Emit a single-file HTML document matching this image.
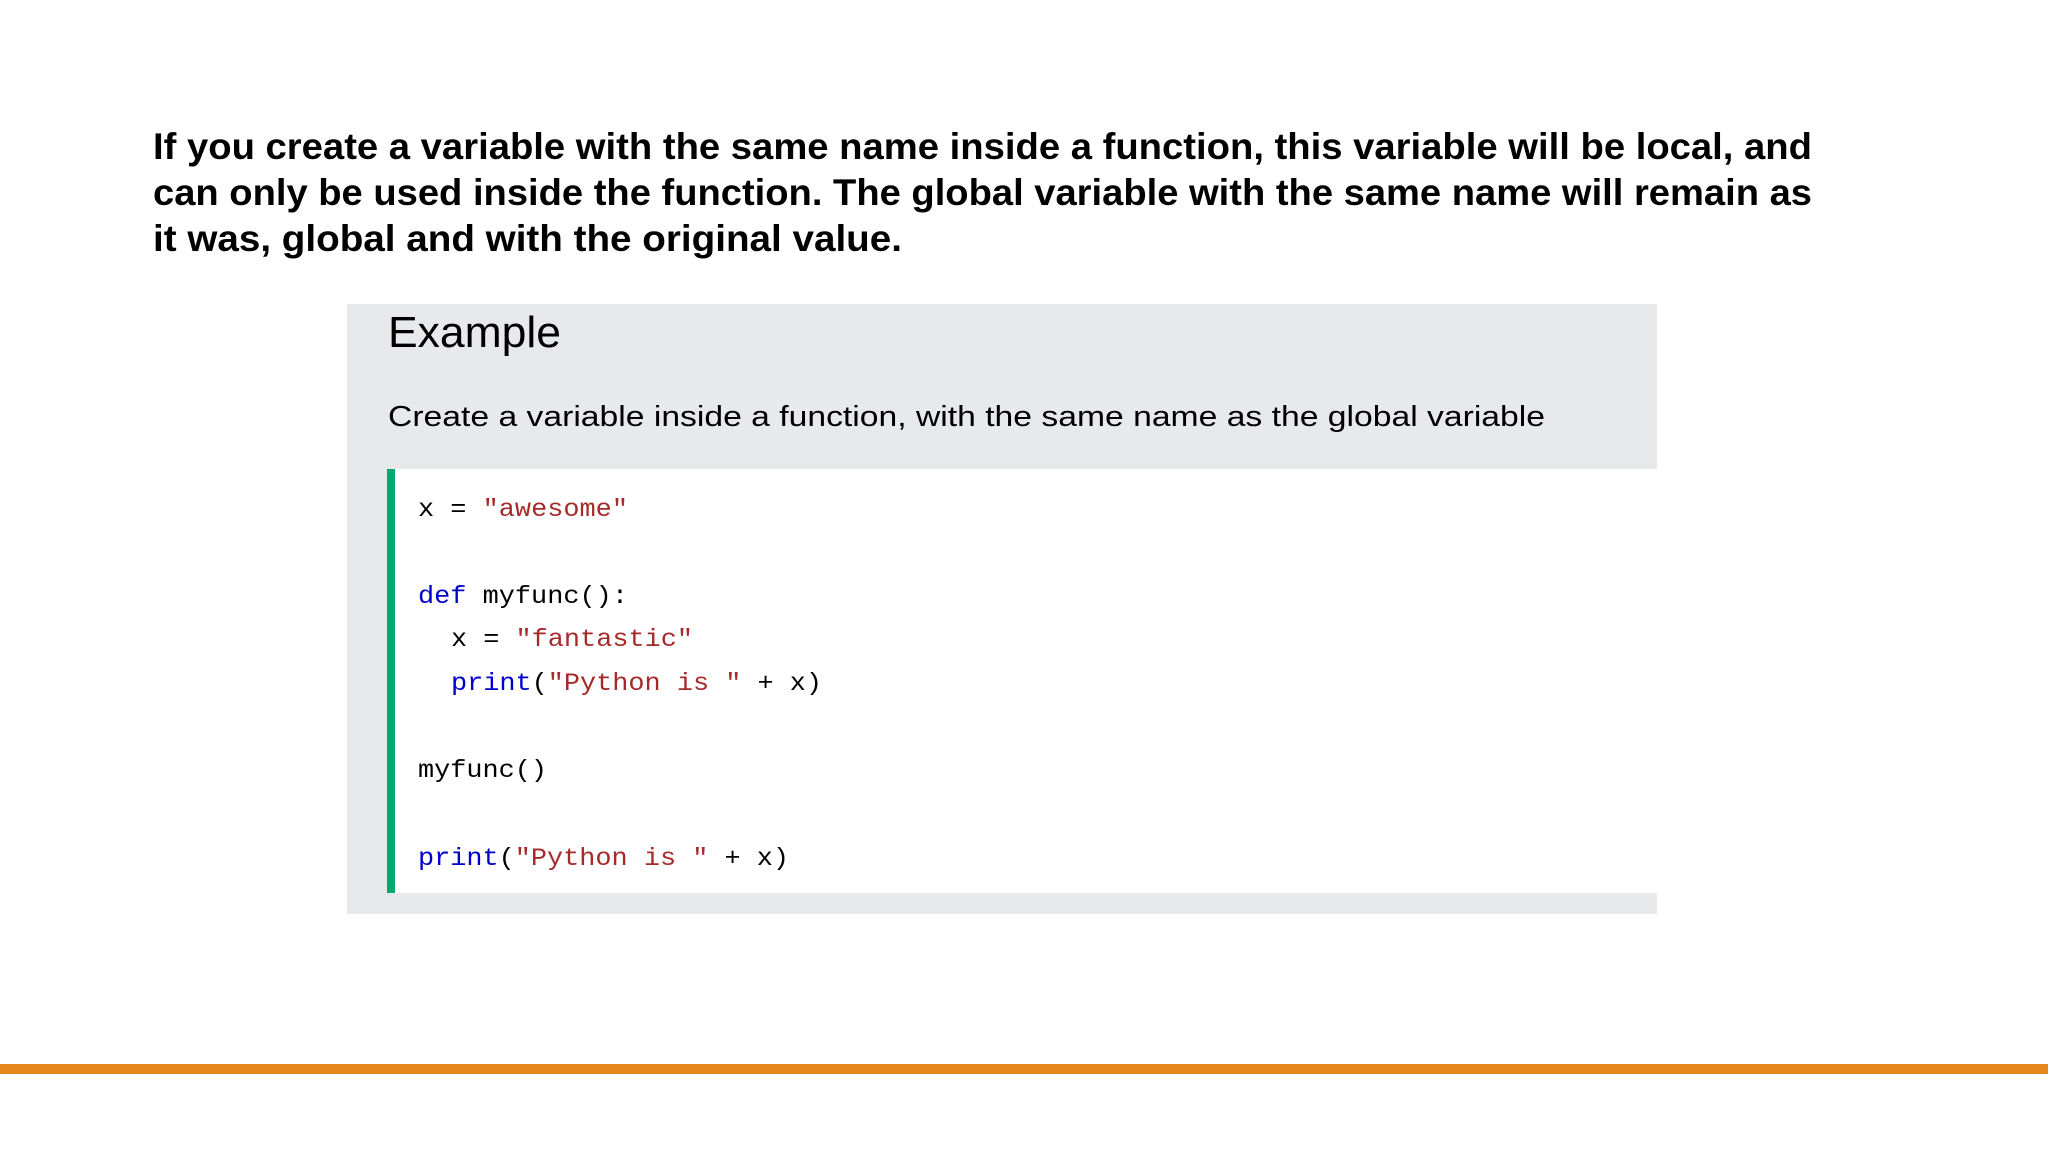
<!DOCTYPE html>
<html><head><meta charset="utf-8"><style>
html,body{margin:0;padding:0;background:#fff;}
svg{display:block}
</style></head><body>
<svg width="2048" height="1152" viewBox="0 0 2048 1152" xmlns="http://www.w3.org/2000/svg">
<rect width="2048" height="1152" fill="#fff"/>
<g font-family="Liberation Sans, sans-serif" font-weight="bold" font-size="37" fill="#000">
<text x="153" y="159" textLength="1659" lengthAdjust="spacingAndGlyphs">If you create a variable with the same name inside a function, this variable will be local, and</text>
<text x="153" y="205" textLength="1659" lengthAdjust="spacingAndGlyphs">can only be used inside the function. The global variable with the same name will remain as</text>
<text x="153" y="251" textLength="749" lengthAdjust="spacingAndGlyphs">it was, global and with the original value.</text>
</g>
<rect x="347" y="304" width="1310" height="610" fill="#e7e9eb"/>
<text x="388" y="347" font-family="Liberation Sans, sans-serif" font-size="44" fill="#000" textLength="173" lengthAdjust="spacingAndGlyphs">Example</text>
<text x="388" y="426" font-family="Liberation Sans, sans-serif" font-size="29" fill="#000" textLength="1157" lengthAdjust="spacingAndGlyphs">Create a variable inside a function, with the same name as the global variable</text>
<rect x="387" y="469" width="1270" height="424" fill="#fff"/>
<rect x="387" y="469" width="8" height="424" fill="#04aa6d"/>
<g font-family="Liberation Mono, monospace" font-size="25" fill="#000">
<text x="418" y="516" textLength="210" lengthAdjust="spacingAndGlyphs">x = <tspan fill="#a52a2a">"awesome"</tspan></text>
<text x="418" y="603" textLength="210" lengthAdjust="spacingAndGlyphs"><tspan fill="#0000cd">def</tspan> myfunc():</text>
<text x="451" y="646" textLength="242" lengthAdjust="spacingAndGlyphs">x = <tspan fill="#a52a2a">"fantastic"</tspan></text>
<text x="451" y="690" textLength="371" lengthAdjust="spacingAndGlyphs"><tspan fill="#0000cd">print</tspan>(<tspan fill="#a52a2a">"Python is "</tspan> + x)</text>
<text x="418" y="777" textLength="129" lengthAdjust="spacingAndGlyphs">myfunc()</text>
<text x="418" y="865" textLength="371" lengthAdjust="spacingAndGlyphs"><tspan fill="#0000cd">print</tspan>(<tspan fill="#a52a2a">"Python is "</tspan> + x)</text>
</g>
<rect x="0" y="1064" width="2048" height="10" fill="#e6861b"/>
</svg>
</body></html>
